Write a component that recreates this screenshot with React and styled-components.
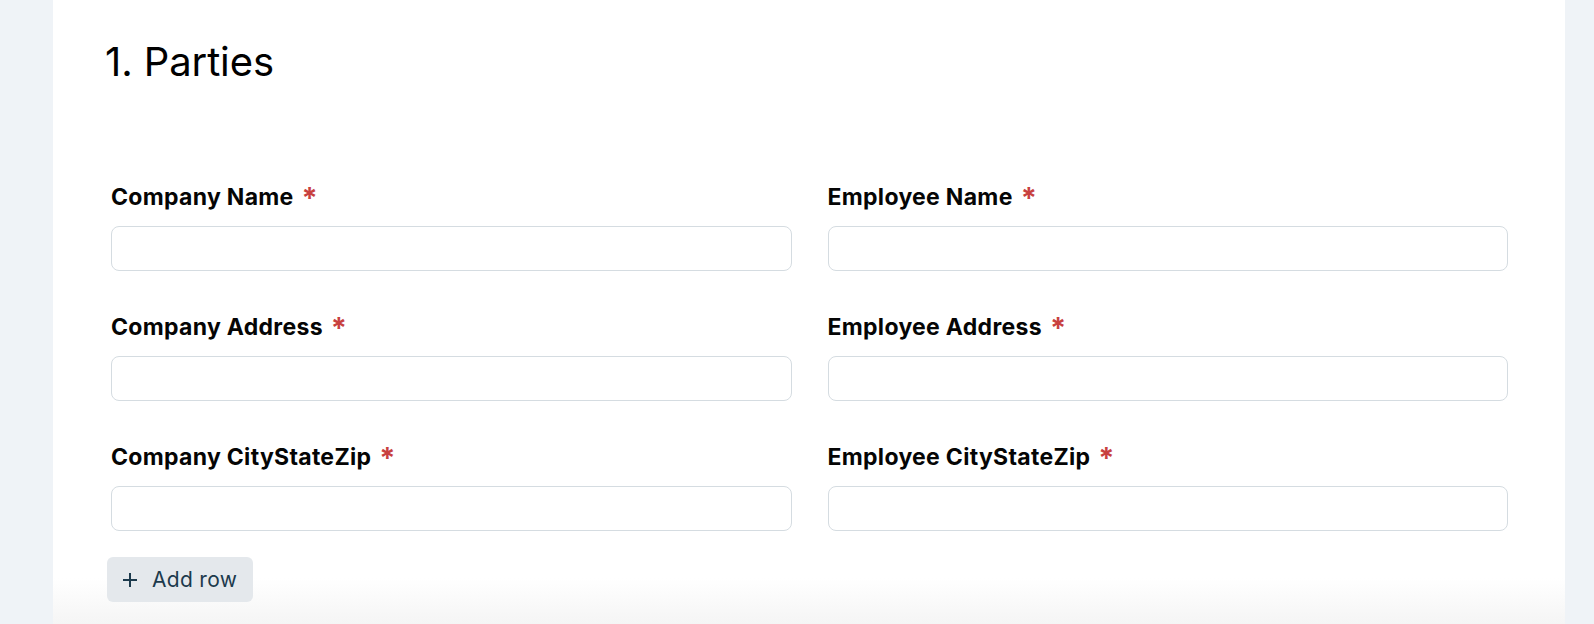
import styled, { createGlobalStyle } from "styled-components";

const GlobalStyle = createGlobalStyle`
  html, body {
    margin: 0;
    padding: 0;
    background: #eff3f7;
    overflow: hidden;
  }
  * {
    box-sizing: border-box;
  }
`;

const Page = styled.div`
  display: flex;
  height: 100vh;
  padding: 0 29px 0 53px;
  font-family: Inter, "Noto Sans", sans-serif;
  color: #000;
`;

const Card = styled.section`
  flex: 1;
  display: flex;
  flex-direction: column;
  padding: 38px 57px 0 58px;
  background: linear-gradient(to bottom, #fff calc(100% - 46px), #f5f5f5 100%);
`;

const Title = styled.h1`
  margin: 0 0 0 -6px;
  font-size: 40px;
  font-weight: 400;
  line-height: 48px;
  letter-spacing: -0.1px;
`;

const FormGrid = styled.div`
  display: grid;
  grid-template-columns: 1fr 1fr;
  column-gap: 36px;
  row-gap: 44px;
  margin-top: 99px;
`;

const Field = styled.div`
  display: flex;
  flex-direction: column;
`;

const Label = styled.label`
  display: block;
  font-size: 23px;
  font-weight: 700;
  line-height: 25px;
  letter-spacing: 0.3px;
  margin-bottom: 16px;
  color: #050505;
`;

const Required = styled.span`
  display: inline-block;
  color: #c8413f;
  margin-left: 8px;
  font-size: 29px;
  line-height: 0;
  vertical-align: -3px;
`;

const Input = styled.input`
  height: 45px;
  width: 100%;
  border: 1px solid #d5dce1;
  border-radius: 8px;
  background: #fff;
  padding: 0 14px;
  font: inherit;
  font-size: 18px;
`;

const AddButton = styled.button`
  align-self: flex-start;
  display: flex;
  align-items: center;
  gap: 15px;
  height: 45px;
  margin: 26px 0 0 -4px;
  padding: 0 16px;
  border: none;
  border-radius: 6px;
  background: #e4e8ec;
  color: #1c3a4c;
  font-family: Inter, "Noto Sans", sans-serif;
  font-size: 21px;
  font-weight: 400;
  letter-spacing: 0.3px;
`;

const fields = [
  ["Company Name", "Employee Name"],
  ["Company Address", "Employee Address"],
  ["Company CityStateZip", "Employee CityStateZip"],
];

const PlusIcon = () => (
  <svg width="14" height="14" viewBox="0 0 14 14" fill="none">
    <path d="M7 0v14M0 7h14" stroke="currentColor" strokeWidth="2" />
  </svg>
);

const App = () => {
  return (
    <>
      <GlobalStyle />
      <Page>
        <Card>
          <Title>1. Parties</Title>
          <FormGrid>
            {fields.flat().map((name) => (
              <Field key={name}>
                <Label>
                  {name}
                  <Required>*</Required>
                </Label>
                <Input type="text" />
              </Field>
            ))}
          </FormGrid>
          <AddButton>
            <PlusIcon />
            Add row
          </AddButton>
        </Card>
      </Page>
    </>
  );
};

export default App;
